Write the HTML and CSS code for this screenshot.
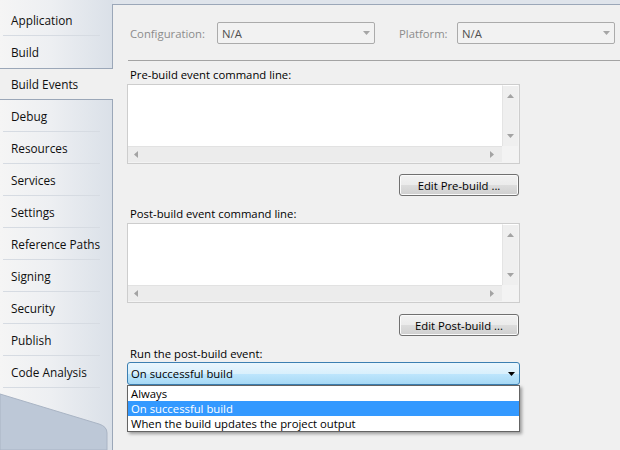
FILE: index.html
```html
<!DOCTYPE html>
<html>
<head>
<meta charset="utf-8">
<link rel="stylesheet" href="styles.css">
</head>
<body>
<div class="window">
  <nav class="sidebar">
    <div class="tab sep">Application</div>
    <div class="tab before-sel">Build</div>
    <div class="tab selected">Build Events</div>
    <div class="tab after-sel sep">Debug</div>
    <div class="tab sep">Resources</div>
    <div class="tab sep">Services</div>
    <div class="tab sep">Settings</div>
    <div class="tab sep">Reference Paths</div>
    <div class="tab sep">Signing</div>
    <div class="tab sep">Security</div>
    <div class="tab sep">Publish</div>
    <div class="tab sep">Code Analysis</div>
    <div class="sidebar-foot">
      <svg width="112" height="62" viewBox="0 0 112 62"><path d="M0 6 L99 36 Q107 38.5 107 45 L107 62 L0 62 Z" fill="#bdc8d7" stroke="#a9b4c4" stroke-width="1"/></svg>
    </div>
  </nav>
  <main class="panel">
    <div class="config-row">
      <span class="cfg-label cfg-conf">Configuration:</span>
      <div class="combo"><span>N/A</span><svg width="7" height="4" viewBox="0 0 7 4"><path d="M0 0H7L3.5 4Z" fill="#a6a6a6"/></svg></div>
      <span class="cfg-label cfg-plat">Platform:</span>
      <div class="combo"><span>N/A</span><svg width="7" height="4" viewBox="0 0 7 4"><path d="M0 0H7L3.5 4Z" fill="#a6a6a6"/></svg></div>
    </div>
    <div class="rule"></div>
    <div class="form">
      <div class="field-label first">Pre-build event command line:</div>
      <div class="textbox">
        <div class="text-area"></div>
        <div class="vscroll">
          <svg width="7" height="4" viewBox="0 0 7 4"><path d="M0 4H7L3.5 0Z" fill="#a3a3a3"/></svg>
          <svg width="7" height="4" viewBox="0 0 7 4"><path d="M0 0H7L3.5 4Z" fill="#a3a3a3"/></svg>
        </div>
        <div class="hscroll">
          <svg width="4" height="7" viewBox="0 0 4 7"><path d="M4 0V7L0 3.5Z" fill="#a3a3a3"/></svg>
          <svg width="4" height="7" viewBox="0 0 4 7"><path d="M0 0V7L4 3.5Z" fill="#a3a3a3"/></svg>
        </div>
        <div class="corner"></div>
      </div>
      <div class="btn-row"><button class="btn">Edit Pre-build ...</button></div>

      <div class="field-label">Post-build event command line:</div>
      <div class="textbox">
        <div class="text-area"></div>
        <div class="vscroll">
          <svg width="7" height="4" viewBox="0 0 7 4"><path d="M0 4H7L3.5 0Z" fill="#a3a3a3"/></svg>
          <svg width="7" height="4" viewBox="0 0 7 4"><path d="M0 0H7L3.5 4Z" fill="#a3a3a3"/></svg>
        </div>
        <div class="hscroll">
          <svg width="4" height="7" viewBox="0 0 4 7"><path d="M4 0V7L0 3.5Z" fill="#a3a3a3"/></svg>
          <svg width="4" height="7" viewBox="0 0 4 7"><path d="M0 0V7L4 3.5Z" fill="#a3a3a3"/></svg>
        </div>
        <div class="corner"></div>
      </div>
      <div class="btn-row second"><button class="btn">Edit Post-build ...</button></div>

      <div class="field-label">Run the post-build event:</div>
      <div class="dropdown">
        <span>On successful build</span>
        <svg width="7" height="4" viewBox="0 0 7 4"><path d="M0 0H7L3.5 4Z" fill="#000"/></svg>
      </div>
      <ul class="dropdown-list">
        <li>Always</li>
        <li class="active">On successful build</li>
        <li>When the build updates the project output</li>
      </ul>
    </div>
  </main>
</div>
</body>
</html>
```

FILE: styles.css
```css
html, body {
  margin: 0;
  padding: 0;
}

body {
  width: 620px;
  height: 450px;
  overflow: hidden;
  background: #dfe4eb;
  font-family: "Open Sans", "Noto Sans", "DejaVu Sans", sans-serif;
  font-size: 11.3px;
  color: #000;
}

.window {
  display: flex;
  height: 450px;
}

/* ---------- sidebar ---------- */
.sidebar {
  width: 113px;
  flex: none;
  display: flex;
  flex-direction: column;
  padding-top: 4px;
  box-sizing: border-box;
  background: linear-gradient(to right, #f5f5f5 0%, #edeff2 45%, #dae0e8 100%);
}

.tab {
  height: 32px;
  line-height: 32px;
  box-sizing: border-box;
  padding-left: 11px;
  border-right: 1px solid #9ba7b8;
  font-size: 11.8px;
  color: #0f0f0f;
  white-space: nowrap;
}

.tab.sep {
  background: linear-gradient(#d6dbe2, #d6dbe2) no-repeat 3px 100% / 97px 1px;
}

.tab.before-sel {
  height: 33px;
  border-bottom: 1px solid #9ba7b8;
}

.tab.selected {
  height: 30px;
  line-height: 30px;
  border-right: none;
  background: #f0f0f0;
}

.tab.after-sel {
  height: 33px;
  line-height: 32px;
  border-top: 1px solid #9ba7b8;
}

.sidebar-foot {
  flex: 1;
  border-right: 1px solid #9ba7b8;
}

.sidebar-foot svg {
  display: block;
}

/* ---------- main panel ---------- */
.panel {
  flex: 1;
  margin-top: 4px;
  background: #f0f0f0;
  border-top: 1px solid #9ba7b8;
}

.config-row {
  display: flex;
  align-items: center;
  padding: 17px 0 0 17px;
  height: 22px;
}

.cfg-label {
  color: #8c8c8c;
  white-space: nowrap;
}

.cfg-conf {
  width: 87px;
}

.cfg-plat {
  width: 58px;
  margin-left: 24px;
}

.combo {
  width: 158px;
  height: 22px;
  box-sizing: border-box;
  border: 1px solid #ababab;
  border-radius: 2px;
  background: #f2f2f2;
  display: flex;
  align-items: center;
  justify-content: space-between;
  padding: 0 4px 0 4px;
  color: #505050;
}

.rule {
  margin: 16px 0 0 15px;
  height: 1px;
  background: #a3a3a3;
}

.form {
  margin-left: 14px;
  width: 393px;
}

.field-label {
  padding-left: 3px;
  height: 15px;
  line-height: 15px;
  margin-top: 10px;
  white-space: nowrap;
}

.field-label.first {
  margin-top: 6px;
}

/* ---------- text box with scrollbars ---------- */
.textbox {
  margin-top: 2px;
  height: 80px;
  box-sizing: border-box;
  border: 1px solid #cdcdcd;
  background: #f3f3f3;
  display: grid;
  grid-template-columns: 1fr 16px;
  grid-template-rows: 1fr 16px;
  padding: 0 1px 1px 0;
}

.text-area {
  background: #fff;
}

.vscroll {
  background: #efefef;
  border-left: 1px solid #e4e4e4;
  border-top: 1px solid #fff;
  display: flex;
  flex-direction: column;
  align-items: center;
  justify-content: space-between;
  padding: 8px 0 8px 0;
  box-sizing: border-box;
}

.hscroll {
  background: #ececec;
  border-top: 1px solid #e2e2e2;
  display: flex;
  align-items: center;
  justify-content: space-between;
  padding: 0 8px 0 6px;
  box-sizing: border-box;
}

.corner {
  background: #f3f3f3;
}

.vscroll svg,
.hscroll svg {
  display: block;
}

/* ---------- buttons ---------- */
.btn-row {
  display: flex;
  justify-content: flex-end;
  margin-top: 10px;
  padding-right: 1px;
}

.btn-row.second {
  margin-top: 11px;
}

.btn {
  width: 120px;
  height: 22px;
  box-sizing: border-box;
  border: 1px solid #707070;
  border-radius: 3px;
  background: linear-gradient(#f2f2f2 0%, #ebebeb 50%, #dddddd 50%, #cfcfcf 100%);
  box-shadow: inset 0 0 0 1px #fbfbfb;
  font-family: inherit;
  font-size: 11.3px;
  color: #000;
  padding: 0;
  margin: 0;
}

/* ---------- dropdown ---------- */
.dropdown {
  margin-top: 1px;
  height: 23px;
  box-sizing: border-box;
  border: 1px solid #3c7fb1;
  border-radius: 3px;
  background: linear-gradient(#eaf6fd 0%, #d9f0fc 50%, #bee6fd 50%, #a7d9f5 100%);
  display: flex;
  align-items: center;
  justify-content: space-between;
  padding: 0 4px 0 3px;
}

.dropdown svg {
  display: block;
}

.dropdown-list {
  list-style: none;
  margin: 0;
  padding: 0;
  border: 1px solid #646464;
  background: #fff;
  box-shadow: 2px 2px 3px rgba(0, 0, 0, 0.35);
}

.dropdown-list li {
  height: 15px;
  line-height: 15px;
  padding-left: 3px;
  white-space: nowrap;
}

.dropdown-list li.active {
  background: #3399ff;
  color: #fff;
}
```
